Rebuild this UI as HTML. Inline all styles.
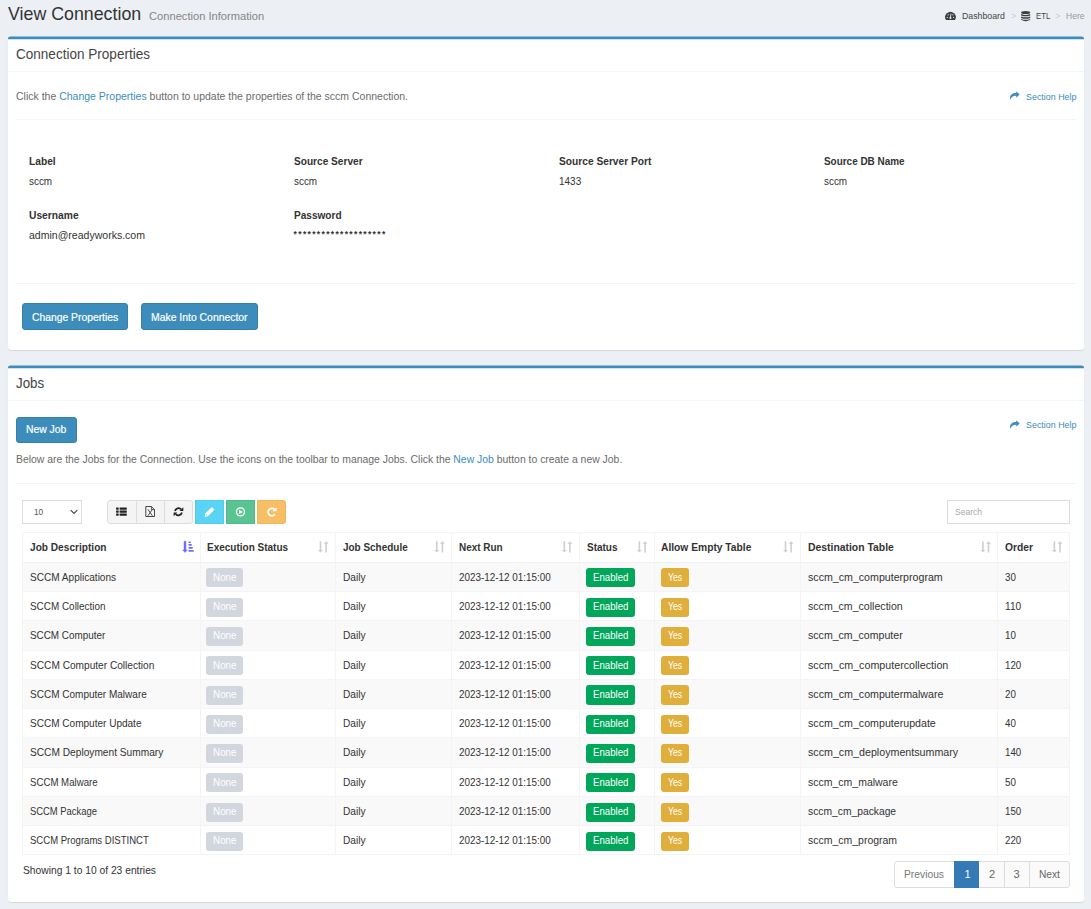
<!DOCTYPE html>
<html lang="en"><head><meta charset="utf-8"><title>View Connection</title>
<style>
html,body{margin:0;padding:0}
body{width:1091px;height:909px;overflow:hidden;background:#ecf0f5;position:relative;font-family:'Liberation Sans', sans-serif;color:#333}
.t{position:absolute;white-space:pre;line-height:1;margin:0;padding:0;transform-origin:0 0}
svg{position:absolute;overflow:visible}
</style></head><body>
<div style="position:absolute;left:8px;top:37px;width:1076px;height:313px;background:#fff;border-radius:3px;box-shadow:0 1px 1px rgba(0,0,0,.1)"></div>
<svg style="left:8px;top:36px" width="1076" height="4"><path d="M0 3.2 V2.5 Q0 0.5 2.5 0.5 H1073.5 Q1076 0.5 1076 2.5 V3.2 Z" fill="#3c8dbc"/></svg>
<div style="position:absolute;left:8px;top:71px;width:1076px;height:1px;background:#f4f4f4;"></div>
<div style="position:absolute;left:16px;top:119px;width:1060px;height:1px;background:#f4f4f4;"></div>
<div style="position:absolute;left:16px;top:283px;width:1060px;height:1px;background:#f4f4f4;"></div>
<div style="position:absolute;left:21.8px;top:303px;width:105.8px;height:27px;background:#3c8dbc;border:1px solid #367fa9;box-sizing:border-box;border-radius:3px"></div>
<div style="position:absolute;left:140.9px;top:303px;width:117.1px;height:27px;background:#3c8dbc;border:1px solid #367fa9;box-sizing:border-box;border-radius:3px"></div>
<div style="position:absolute;left:8px;top:366px;width:1076px;height:536px;background:#fff;border-radius:3px;box-shadow:0 1px 1px rgba(0,0,0,.1)"></div>
<svg style="left:8px;top:365px" width="1076" height="4"><path d="M0 3.2 V2.5 Q0 0.5 2.5 0.5 H1073.5 Q1076 0.5 1076 2.5 V3.2 Z" fill="#3c8dbc"/></svg>
<div style="position:absolute;left:8px;top:400px;width:1076px;height:1px;background:#f4f4f4;"></div>
<div style="position:absolute;left:16.2px;top:416.5px;width:60.8px;height:26.7px;background:#3c8dbc;border:1px solid #367fa9;box-sizing:border-box;border-radius:3px"></div>
<div style="position:absolute;left:16px;top:483px;width:1060px;height:1px;background:#f4f4f4;"></div>
<div style="position:absolute;left:22px;top:500px;width:60px;height:24px;background:#fff;border:1px solid #dadde4;box-sizing:border-box"></div>
<svg style="left:70px;top:508.5px" width="8" height="6" viewBox="0 0 8 6"><path d="M0.7 1.2 L4 4.5 L7.3 1.2" fill="none" stroke="#444" stroke-width="1.1"/></svg>
<div style="position:absolute;left:946.5px;top:500px;width:123.5px;height:24px;background:#fff;border:1px solid #d8dbe2;box-sizing:border-box"></div>
<div style="position:absolute;left:106.5px;top:500px;width:86.5px;height:24px;background:#f4f4f4;border:1px solid #ddd;box-sizing:border-box;border-radius:3px"></div>
<div style="position:absolute;left:136.3px;top:500px;width:1px;height:24px;background:#ddd;"></div>
<div style="position:absolute;left:163.8px;top:500px;width:1px;height:24px;background:#ddd;"></div>
<div style="position:absolute;left:194.7px;top:500px;width:29px;height:24px;background:#59d4f4;box-sizing:border-box;border:1px solid #55cbea"></div>
<div style="position:absolute;left:226px;top:500px;width:29px;height:24px;background:#59c492;box-sizing:border-box;border:1px solid #55b98a"></div>
<div style="position:absolute;left:257.1px;top:500px;width:29px;height:24px;background:#f7be65;box-sizing:border-box;border:1px solid #efb65e;border-radius:0 3px 3px 0"></div>
<div style="position:absolute;left:22px;top:562px;width:1048px;height:29px;background:#f9f9f9;"></div>
<div style="position:absolute;left:22px;top:620px;width:1048px;height:30px;background:#f9f9f9;"></div>
<div style="position:absolute;left:22px;top:679px;width:1048px;height:29px;background:#f9f9f9;"></div>
<div style="position:absolute;left:22px;top:737px;width:1048px;height:30px;background:#f9f9f9;"></div>
<div style="position:absolute;left:22px;top:796px;width:1048px;height:29px;background:#f9f9f9;"></div>
<div style="position:absolute;left:22px;top:532px;width:1048px;height:1px;background:#f4f4f4;"></div>
<div style="position:absolute;left:22px;top:562px;width:1048px;height:1px;background:#f0f0f0;"></div>
<div style="position:absolute;left:22px;top:591px;width:1048px;height:1px;background:#f4f4f4;"></div>
<div style="position:absolute;left:22px;top:620px;width:1048px;height:1px;background:#f4f4f4;"></div>
<div style="position:absolute;left:22px;top:650px;width:1048px;height:1px;background:#f4f4f4;"></div>
<div style="position:absolute;left:22px;top:679px;width:1048px;height:1px;background:#f4f4f4;"></div>
<div style="position:absolute;left:22px;top:708px;width:1048px;height:1px;background:#f4f4f4;"></div>
<div style="position:absolute;left:22px;top:737px;width:1048px;height:1px;background:#f4f4f4;"></div>
<div style="position:absolute;left:22px;top:767px;width:1048px;height:1px;background:#f4f4f4;"></div>
<div style="position:absolute;left:22px;top:796px;width:1048px;height:1px;background:#f4f4f4;"></div>
<div style="position:absolute;left:22px;top:825px;width:1048px;height:1px;background:#f4f4f4;"></div>
<div style="position:absolute;left:22px;top:854px;width:1048px;height:1px;background:#f4f4f4;"></div>
<div style="position:absolute;left:22px;top:532px;width:1px;height:323px;background:#f4f4f4;"></div>
<div style="position:absolute;left:200px;top:532px;width:1px;height:323px;background:#f4f4f4;"></div>
<div style="position:absolute;left:335px;top:532px;width:1px;height:323px;background:#f4f4f4;"></div>
<div style="position:absolute;left:451px;top:532px;width:1px;height:323px;background:#f4f4f4;"></div>
<div style="position:absolute;left:579px;top:532px;width:1px;height:323px;background:#f4f4f4;"></div>
<div style="position:absolute;left:654px;top:532px;width:1px;height:323px;background:#f4f4f4;"></div>
<div style="position:absolute;left:800px;top:532px;width:1px;height:323px;background:#f4f4f4;"></div>
<div style="position:absolute;left:997px;top:532px;width:1px;height:323px;background:#f4f4f4;"></div>
<div style="position:absolute;left:1069px;top:532px;width:1px;height:323px;background:#f4f4f4;"></div>
<div style="position:absolute;left:206.4px;top:568.4px;width:36.4px;height:19px;background:#d2d6de;border-radius:3px"></div>
<div style="position:absolute;left:586px;top:568.3px;width:49.2px;height:19.2px;background:#00a65a;border-radius:3px"></div>
<div style="position:absolute;left:661.2px;top:568.3px;width:27.4px;height:19.2px;background:#e0ae3b;border-radius:3px"></div>
<div style="position:absolute;left:206.4px;top:597.7px;width:36.4px;height:19px;background:#d2d6de;border-radius:3px"></div>
<div style="position:absolute;left:586px;top:597.6px;width:49.2px;height:19.2px;background:#00a65a;border-radius:3px"></div>
<div style="position:absolute;left:661.2px;top:597.6px;width:27.4px;height:19.2px;background:#e0ae3b;border-radius:3px"></div>
<div style="position:absolute;left:206.4px;top:626.9px;width:36.4px;height:19px;background:#d2d6de;border-radius:3px"></div>
<div style="position:absolute;left:586px;top:626.8px;width:49.2px;height:19.2px;background:#00a65a;border-radius:3px"></div>
<div style="position:absolute;left:661.2px;top:626.8px;width:27.4px;height:19.2px;background:#e0ae3b;border-radius:3px"></div>
<div style="position:absolute;left:206.4px;top:656.2px;width:36.4px;height:19px;background:#d2d6de;border-radius:3px"></div>
<div style="position:absolute;left:586px;top:656.1px;width:49.2px;height:19.2px;background:#00a65a;border-radius:3px"></div>
<div style="position:absolute;left:661.2px;top:656.1px;width:27.4px;height:19.2px;background:#e0ae3b;border-radius:3px"></div>
<div style="position:absolute;left:206.4px;top:685.5px;width:36.4px;height:19px;background:#d2d6de;border-radius:3px"></div>
<div style="position:absolute;left:586px;top:685.4px;width:49.2px;height:19.2px;background:#00a65a;border-radius:3px"></div>
<div style="position:absolute;left:661.2px;top:685.4px;width:27.4px;height:19.2px;background:#e0ae3b;border-radius:3px"></div>
<div style="position:absolute;left:206.4px;top:714.8px;width:36.4px;height:19px;background:#d2d6de;border-radius:3px"></div>
<div style="position:absolute;left:586px;top:714.7px;width:49.2px;height:19.2px;background:#00a65a;border-radius:3px"></div>
<div style="position:absolute;left:661.2px;top:714.7px;width:27.4px;height:19.2px;background:#e0ae3b;border-radius:3px"></div>
<div style="position:absolute;left:206.4px;top:744.0px;width:36.4px;height:19px;background:#d2d6de;border-radius:3px"></div>
<div style="position:absolute;left:586px;top:743.9px;width:49.2px;height:19.2px;background:#00a65a;border-radius:3px"></div>
<div style="position:absolute;left:661.2px;top:743.9px;width:27.4px;height:19.2px;background:#e0ae3b;border-radius:3px"></div>
<div style="position:absolute;left:206.4px;top:773.3px;width:36.4px;height:19px;background:#d2d6de;border-radius:3px"></div>
<div style="position:absolute;left:586px;top:773.2px;width:49.2px;height:19.2px;background:#00a65a;border-radius:3px"></div>
<div style="position:absolute;left:661.2px;top:773.2px;width:27.4px;height:19.2px;background:#e0ae3b;border-radius:3px"></div>
<div style="position:absolute;left:206.4px;top:802.6px;width:36.4px;height:19px;background:#d2d6de;border-radius:3px"></div>
<div style="position:absolute;left:586px;top:802.5px;width:49.2px;height:19.2px;background:#00a65a;border-radius:3px"></div>
<div style="position:absolute;left:661.2px;top:802.5px;width:27.4px;height:19.2px;background:#e0ae3b;border-radius:3px"></div>
<div style="position:absolute;left:206.4px;top:831.8px;width:36.4px;height:19px;background:#d2d6de;border-radius:3px"></div>
<div style="position:absolute;left:586px;top:831.7px;width:49.2px;height:19.2px;background:#00a65a;border-radius:3px"></div>
<div style="position:absolute;left:661.2px;top:831.7px;width:27.4px;height:19.2px;background:#e0ae3b;border-radius:3px"></div>
<div style="position:absolute;left:893.6px;top:861px;width:176.1px;height:27px;background:#fafafa;border:1px solid #ddd;box-sizing:border-box;border-radius:3px"></div>
<div style="position:absolute;left:894.6px;top:862px;width:59.4px;height:25px;background:#fff;border-radius:3px 0 0 3px"></div>
<div style="position:absolute;left:954px;top:861px;width:25.4px;height:27px;background:#337ab7;"></div>
<div style="position:absolute;left:1003.5px;top:861px;width:1px;height:27px;background:#ddd;"></div>
<div style="position:absolute;left:1028.7px;top:861px;width:1px;height:27px;background:#ddd;"></div>
<svg style="left:0;top:0;" width="1091" height="909" viewBox="0 0 1091 909"><path d="M946 20.1 A5.3 5.3 0 1 1 954.9 20.1 Z" fill="#3d3d3d"/><circle cx="950.45" cy="18" r="1.05" fill="#ecf0f5"/><path d="M950.45 17.6 L950.9 14" stroke="#ecf0f5" stroke-width="0.9" stroke-linecap="round"/><circle cx="947.3" cy="17.3" r="0.65" fill="#ecf0f5"/><circle cx="948.1" cy="14.8" r="0.65" fill="#ecf0f5"/><circle cx="953.6" cy="17.3" r="0.65" fill="#ecf0f5"/><circle cx="952.9" cy="14.8" r="0.65" fill="#ecf0f5"/><ellipse cx="1025.65" cy="12.4" rx="4.55" ry="1.5" fill="#3d3d3d"/><path d="M1021.1 14.1 q4.55 1.7 9.1 0 v1.4 q-4.55 1.7 -9.1 0 z M1021.1 16.5 q4.55 1.7 9.1 0 v1.4 q-4.55 1.7 -9.1 0 z M1021.1 18.9 q4.55 1.7 9.1 0 v0.9 q-4.55 2.9 -9.1 0 z" fill="#3d3d3d"/><path d="M1016.3 91.3 L1019.6 94.5 L1016.3 97.8 V95.8 C1013.2 95.7 1011.2 96.8 1010.5 100.0 C1009 96.2 1011.2 92.9 1016.3 92.9 Z" fill="#3c8dbc"/><path d="M1016.3 420.3 L1019.6 423.5 L1016.3 426.8 V424.8 C1013.2 424.7 1011.2 425.8 1010.5 429.0 C1009 425.2 1011.2 421.9 1016.3 421.9 Z" fill="#3c8dbc"/><rect x="116.1" y="507.4" width="2.6" height="2.3" rx="0.4" fill="#222"/><rect x="119.6" y="507.4" width="7.2" height="2.3" rx="0.4" fill="#222"/><rect x="116.1" y="510.4" width="2.6" height="2.3" rx="0.4" fill="#222"/><rect x="119.6" y="510.4" width="7.2" height="2.3" rx="0.4" fill="#222"/><rect x="116.1" y="513.4" width="2.6" height="2.3" rx="0.4" fill="#222"/><rect x="119.6" y="513.4" width="7.2" height="2.3" rx="0.4" fill="#222"/><path d="M145.8 506.5 H151.4 L154.5 509.6 V516.5 H145.8 Z" fill="none" stroke="#333" stroke-width="0.9"/><path d="M151.4 506.5 V509.6 H154.5" fill="none" stroke="#333" stroke-width="0.8"/><path d="M147.9 509.4 L152.4 515.8 M152.4 509.4 L147.9 515.8" stroke="#444" stroke-width="0.95"/><path d="M175 511 A3.6 3.6 0 0 1 181.2 509.4" fill="none" stroke="#222" stroke-width="1.7"/><path d="M183.3 507.3 V511 H179.6 Z" fill="#222"/><path d="M181.9 512.5 A3.6 3.6 0 0 1 175.7 514.1" fill="none" stroke="#222" stroke-width="1.7"/><path d="M173.6 516.2 V512.5 H177.3 Z" fill="#222"/><path d="M204.6 516.9 L205.3 513.6 L211.2 507.7 Q211.9 507 212.6 507.7 L213.8 508.9 Q214.5 509.6 213.8 510.3 L207.9 516.2 Z" fill="#fff"/><circle cx="206.4" cy="515.1" r="0.55" fill="#59d4f4"/><circle cx="240.5" cy="511.9" r="4" fill="none" stroke="#fff" stroke-width="1.4"/><path d="M239.2 509.8 V514 L242.8 511.9 Z" fill="#fff"/><path d="M274.9 514.3 A3.75 3.75 0 1 1 274.5 509.5" fill="none" stroke="#fff" stroke-width="1.8"/><path d="M276.6 507.3 V511.3 H272.6 Z" fill="#fff"/><path d="M319.7 541.2 H321.3 V550 H323.0 L320.5 552.6 L318.0 550 H319.7 Z" fill="#cfcfcf"/><path d="M325.3 552.6 H326.9 V543.8 H328.6 L326.1 541.2 L323.6 543.8 H325.3 Z" fill="#cfcfcf"/><path d="M436.0 541.2 H437.6 V550 H439.3 L436.8 552.6 L434.3 550 H436.0 Z" fill="#cfcfcf"/><path d="M441.6 552.6 H443.2 V543.8 H444.9 L442.4 541.2 L439.9 543.8 H441.6 Z" fill="#cfcfcf"/><path d="M563.5 541.2 H565.1 V550 H566.8 L564.3 552.6 L561.8 550 H563.5 Z" fill="#cfcfcf"/><path d="M569.1 552.6 H570.7 V543.8 H572.4 L569.9 541.2 L567.4 543.8 H569.1 Z" fill="#cfcfcf"/><path d="M638.6 541.2 H640.2 V550 H641.9 L639.4 552.6 L636.9 550 H638.6 Z" fill="#cfcfcf"/><path d="M644.2 552.6 H645.8 V543.8 H647.5 L645.0 541.2 L642.5 543.8 H644.2 Z" fill="#cfcfcf"/><path d="M784.7 541.2 H786.3 V550 H788.0 L785.5 552.6 L783.0 550 H784.7 Z" fill="#cfcfcf"/><path d="M790.3 552.6 H791.9 V543.8 H793.6 L791.1 541.2 L788.6 543.8 H790.3 Z" fill="#cfcfcf"/><path d="M982.1 541.2 H983.7 V550 H985.4 L982.9 552.6 L980.4 550 H982.1 Z" fill="#cfcfcf"/><path d="M987.7 552.6 H989.3 V543.8 H991.0 L988.5 541.2 L986.0 543.8 H987.7 Z" fill="#cfcfcf"/><path d="M1053.6 541.2 H1055.2 V550 H1056.9 L1054.4 552.6 L1051.9 550 H1053.6 Z" fill="#cfcfcf"/><path d="M1059.2 552.6 H1060.8 V543.8 H1062.5 L1060.0 541.2 L1057.5 543.8 H1059.2 Z" fill="#cfcfcf"/><path d="M184 541.2 H186 V549.9 H187.4 L185 552.6 L182.6 549.9 H184 Z" fill="#6c6cff" stroke="#6c6cff" stroke-width="0.4" stroke-linejoin="round"/><rect x="188.5" y="541.4" width="2.3" height="1.7" rx="0.3" fill="#6c6cff"/><rect x="188.5" y="544.1" width="3.3" height="1.7" rx="0.3" fill="#6c6cff"/><rect x="188.5" y="547" width="4.2" height="1.8" rx="0.3" fill="#6c6cff"/><rect x="188.5" y="549.9" width="5.2" height="1.8" rx="0.3" fill="#6c6cff"/></svg>
<span class="t" style="left:8.2px;top:5px;font-size:18.6px;color:#333;transform:scaleX(0.9569);">View Connection</span>
<span class="t" style="left:149.4px;top:10px;font-size:11.6px;color:#858585;transform:scaleX(0.9610);">Connection Information</span>
<span class="t" style="left:961.5px;top:11px;font-size:9.6px;color:#444;transform:scaleX(0.9119);">Dashboard</span>
<span class="t" style="left:1010.9px;top:11px;font-size:9.6px;color:#ccc;">&gt;</span>
<span class="t" style="left:1035.5px;top:11px;font-size:9.6px;color:#444;transform:scaleX(0.8121);">ETL</span>
<span class="t" style="left:1054.9px;top:11px;font-size:9.6px;color:#ccc;">&gt;</span>
<span class="t" style="left:1065.5px;top:11px;font-size:9.6px;color:#999;transform:scaleX(0.8896);">Here</span>
<span class="t" style="left:16.2px;top:47px;font-size:14.2px;color:#444;transform:scaleX(0.9545);">Connection Properties</span>
<span class="t" style="left:16.2px;top:91px;font-size:11px;color:#6b6b6b;transform:scaleX(0.9539);">Click the <span style="color:#3c8dbc">Change Properties</span> button to update the properties of the sccm Connection.</span>
<span class="t" style="left:1025.7px;top:92px;font-size:9.6px;color:#3c8dbc;transform:scaleX(0.9282);">Section Help</span>
<span class="t" style="left:28.6px;top:156px;font-size:11px;color:#333;font-weight:700;transform:scaleX(0.9292);">Label</span>
<span class="t" style="left:293.7px;top:156px;font-size:11px;color:#333;font-weight:700;transform:scaleX(0.9195);">Source Server</span>
<span class="t" style="left:558.6px;top:156px;font-size:11px;color:#333;font-weight:700;transform:scaleX(0.9272);">Source Server Port</span>
<span class="t" style="left:823.6px;top:156px;font-size:11px;color:#333;font-weight:700;transform:scaleX(0.9029);">Source DB Name</span>
<span class="t" style="left:28.6px;top:176px;font-size:11px;color:#333;transform:scaleX(0.8998);">sccm</span>
<span class="t" style="left:293.7px;top:176px;font-size:11px;color:#333;transform:scaleX(0.8998);">sccm</span>
<span class="t" style="left:558.6px;top:176px;font-size:11px;color:#333;transform:scaleX(0.9067);">1433</span>
<span class="t" style="left:823.6px;top:176px;font-size:11px;color:#333;transform:scaleX(0.8998);">sccm</span>
<span class="t" style="left:28.6px;top:210px;font-size:11px;color:#333;font-weight:700;transform:scaleX(0.9323);">Username</span>
<span class="t" style="left:293.7px;top:210px;font-size:11px;color:#333;font-weight:700;transform:scaleX(0.9159);">Password</span>
<span class="t" style="left:28.6px;top:230px;font-size:11px;color:#333;transform:scaleX(0.9569);">admin@readyworks.com</span>
<span class="t" style="left:293.6px;top:230px;font-size:8.5px;color:#333;font-weight:700;letter-spacing:1.34px;">********************</span>
<span class="t" style="left:31.6px;top:312px;font-size:11px;color:#fff;transform:scaleX(0.9397);-webkit-text-stroke:0.2px #fff;">Change Properties</span>
<span class="t" style="left:151.4px;top:312px;font-size:11px;color:#fff;transform:scaleX(0.9459);-webkit-text-stroke:0.2px #fff;">Make Into Connector</span>
<span class="t" style="left:16.2px;top:376px;font-size:14.2px;color:#444;transform:scaleX(0.9410);">Jobs</span>
<span class="t" style="left:26.4px;top:424px;font-size:11px;color:#fff;transform:scaleX(0.9417);-webkit-text-stroke:0.2px #fff;">New Job</span>
<span class="t" style="left:1025.7px;top:420px;font-size:9.6px;color:#3c8dbc;transform:scaleX(0.9282);">Section Help</span>
<span class="t" style="left:16.2px;top:454px;font-size:11px;color:#6b6b6b;transform:scaleX(0.9461);">Below are the Jobs for the Connection. Use the icons on the toolbar to manage Jobs. Click the <span style="color:#3c8dbc">New Job</span> button to create a new Job.</span>
<span class="t" style="left:34.3px;top:508px;font-size:9px;color:#555;transform:scaleX(0.9186);">10</span>
<span class="t" style="left:955px;top:507px;font-size:9.5px;color:#aaa;transform:scaleX(0.8967);">Search</span>
<span class="t" style="left:29.8px;top:542px;font-size:11px;color:#333;font-weight:700;transform:scaleX(0.9203);">Job Description</span>
<span class="t" style="left:206.9px;top:542px;font-size:11px;color:#333;font-weight:700;transform:scaleX(0.9087);">Execution Status</span>
<span class="t" style="left:342.9px;top:542px;font-size:11px;color:#333;font-weight:700;transform:scaleX(0.9045);">Job Schedule</span>
<span class="t" style="left:459.2px;top:542px;font-size:11px;color:#333;font-weight:700;transform:scaleX(0.9030);">Next Run</span>
<span class="t" style="left:586.5px;top:542px;font-size:11px;color:#333;font-weight:700;transform:scaleX(0.9071);">Status</span>
<span class="t" style="left:661.4px;top:542px;font-size:11px;color:#333;font-weight:700;transform:scaleX(0.9321);">Allow Empty Table</span>
<span class="t" style="left:807.6px;top:542px;font-size:11px;color:#333;font-weight:700;transform:scaleX(0.9442);">Destination Table</span>
<span class="t" style="left:1004.8px;top:542px;font-size:11px;color:#333;font-weight:700;transform:scaleX(0.9343);">Order</span>
<span class="t" style="left:29.8px;top:572px;font-size:11px;color:#333;transform:scaleX(0.9144);">SCCM Applications</span>
<span class="t" style="left:213.3px;top:573px;font-size:10px;color:#fff;transform:scaleX(0.9872);">None</span>
<span class="t" style="left:342.9px;top:572px;font-size:11px;color:#333;transform:scaleX(0.9242);">Daily</span>
<span class="t" style="left:459.2px;top:572px;font-size:11px;color:#333;transform:scaleX(0.8986);">2023-12-12 01:15:00</span>
<span class="t" style="left:592.9px;top:573px;font-size:10px;color:#fff;transform:scaleX(0.9645);">Enabled</span>
<span class="t" style="left:667.8px;top:573px;font-size:10px;color:#fff;transform:scaleX(0.8697);">Yes</span>
<span class="t" style="left:807.6px;top:572px;font-size:11px;color:#333;transform:scaleX(0.9665);">sccm_cm_computerprogram</span>
<span class="t" style="left:1004.8px;top:572px;font-size:11px;color:#333;transform:scaleX(0.8898);">30</span>
<span class="t" style="left:29.8px;top:601px;font-size:11px;color:#333;transform:scaleX(0.9015);">SCCM Collection</span>
<span class="t" style="left:213.3px;top:602px;font-size:10px;color:#fff;transform:scaleX(0.9872);">None</span>
<span class="t" style="left:342.9px;top:601px;font-size:11px;color:#333;transform:scaleX(0.9242);">Daily</span>
<span class="t" style="left:459.2px;top:601px;font-size:11px;color:#333;transform:scaleX(0.8986);">2023-12-12 01:15:00</span>
<span class="t" style="left:592.9px;top:602px;font-size:10px;color:#fff;transform:scaleX(0.9645);">Enabled</span>
<span class="t" style="left:667.8px;top:602px;font-size:10px;color:#fff;transform:scaleX(0.8697);">Yes</span>
<span class="t" style="left:807.6px;top:601px;font-size:11px;color:#333;transform:scaleX(0.9622);">sccm_cm_collection</span>
<span class="t" style="left:1004.8px;top:601px;font-size:11px;color:#333;transform:scaleX(0.9232);">110</span>
<span class="t" style="left:29.8px;top:630px;font-size:11px;color:#333;transform:scaleX(0.8979);">SCCM Computer</span>
<span class="t" style="left:213.3px;top:631px;font-size:10px;color:#fff;transform:scaleX(0.9872);">None</span>
<span class="t" style="left:342.9px;top:630px;font-size:11px;color:#333;transform:scaleX(0.9242);">Daily</span>
<span class="t" style="left:459.2px;top:630px;font-size:11px;color:#333;transform:scaleX(0.8986);">2023-12-12 01:15:00</span>
<span class="t" style="left:592.9px;top:631px;font-size:10px;color:#fff;transform:scaleX(0.9645);">Enabled</span>
<span class="t" style="left:667.8px;top:631px;font-size:10px;color:#fff;transform:scaleX(0.8697);">Yes</span>
<span class="t" style="left:807.6px;top:630px;font-size:11px;color:#333;transform:scaleX(0.9622);">sccm_cm_computer</span>
<span class="t" style="left:1004.8px;top:630px;font-size:11px;color:#333;transform:scaleX(0.8898);">10</span>
<span class="t" style="left:29.8px;top:660px;font-size:11px;color:#333;transform:scaleX(0.9207);">SCCM Computer Collection</span>
<span class="t" style="left:213.3px;top:661px;font-size:10px;color:#fff;transform:scaleX(0.9872);">None</span>
<span class="t" style="left:342.9px;top:660px;font-size:11px;color:#333;transform:scaleX(0.9242);">Daily</span>
<span class="t" style="left:459.2px;top:660px;font-size:11px;color:#333;transform:scaleX(0.8986);">2023-12-12 01:15:00</span>
<span class="t" style="left:592.9px;top:661px;font-size:10px;color:#fff;transform:scaleX(0.9645);">Enabled</span>
<span class="t" style="left:667.8px;top:661px;font-size:10px;color:#fff;transform:scaleX(0.8697);">Yes</span>
<span class="t" style="left:807.6px;top:660px;font-size:11px;color:#333;transform:scaleX(0.9724);">sccm_cm_computercollection</span>
<span class="t" style="left:1004.8px;top:660px;font-size:11px;color:#333;transform:scaleX(0.8824);">120</span>
<span class="t" style="left:29.8px;top:689px;font-size:11px;color:#333;transform:scaleX(0.9098);">SCCM Computer Malware</span>
<span class="t" style="left:213.3px;top:690px;font-size:10px;color:#fff;transform:scaleX(0.9872);">None</span>
<span class="t" style="left:342.9px;top:689px;font-size:11px;color:#333;transform:scaleX(0.9242);">Daily</span>
<span class="t" style="left:459.2px;top:689px;font-size:11px;color:#333;transform:scaleX(0.8986);">2023-12-12 01:15:00</span>
<span class="t" style="left:592.9px;top:690px;font-size:10px;color:#fff;transform:scaleX(0.9645);">Enabled</span>
<span class="t" style="left:667.8px;top:690px;font-size:10px;color:#fff;transform:scaleX(0.8697);">Yes</span>
<span class="t" style="left:807.6px;top:689px;font-size:11px;color:#333;transform:scaleX(0.9673);">sccm_cm_computermalware</span>
<span class="t" style="left:1004.8px;top:689px;font-size:11px;color:#333;transform:scaleX(0.8898);">20</span>
<span class="t" style="left:29.8px;top:718px;font-size:11px;color:#333;transform:scaleX(0.9118);">SCCM Computer Update</span>
<span class="t" style="left:213.3px;top:719px;font-size:10px;color:#fff;transform:scaleX(0.9872);">None</span>
<span class="t" style="left:342.9px;top:718px;font-size:11px;color:#333;transform:scaleX(0.9242);">Daily</span>
<span class="t" style="left:459.2px;top:718px;font-size:11px;color:#333;transform:scaleX(0.8986);">2023-12-12 01:15:00</span>
<span class="t" style="left:592.9px;top:719px;font-size:10px;color:#fff;transform:scaleX(0.9645);">Enabled</span>
<span class="t" style="left:667.8px;top:719px;font-size:10px;color:#fff;transform:scaleX(0.8697);">Yes</span>
<span class="t" style="left:807.6px;top:718px;font-size:11px;color:#333;transform:scaleX(0.9677);">sccm_cm_computerupdate</span>
<span class="t" style="left:1004.8px;top:718px;font-size:11px;color:#333;transform:scaleX(0.8898);">40</span>
<span class="t" style="left:29.8px;top:747px;font-size:11px;color:#333;transform:scaleX(0.9240);">SCCM Deployment Summary</span>
<span class="t" style="left:213.3px;top:748px;font-size:10px;color:#fff;transform:scaleX(0.9872);">None</span>
<span class="t" style="left:342.9px;top:747px;font-size:11px;color:#333;transform:scaleX(0.9242);">Daily</span>
<span class="t" style="left:459.2px;top:747px;font-size:11px;color:#333;transform:scaleX(0.8986);">2023-12-12 01:15:00</span>
<span class="t" style="left:592.9px;top:748px;font-size:10px;color:#fff;transform:scaleX(0.9645);">Enabled</span>
<span class="t" style="left:667.8px;top:748px;font-size:10px;color:#fff;transform:scaleX(0.8697);">Yes</span>
<span class="t" style="left:807.6px;top:747px;font-size:11px;color:#333;transform:scaleX(0.9712);">sccm_cm_deploymentsummary</span>
<span class="t" style="left:1004.8px;top:747px;font-size:11px;color:#333;transform:scaleX(0.8824);">140</span>
<span class="t" style="left:29.8px;top:777px;font-size:11px;color:#333;transform:scaleX(0.8777);">SCCM Malware</span>
<span class="t" style="left:213.3px;top:778px;font-size:10px;color:#fff;transform:scaleX(0.9872);">None</span>
<span class="t" style="left:342.9px;top:777px;font-size:11px;color:#333;transform:scaleX(0.9242);">Daily</span>
<span class="t" style="left:459.2px;top:777px;font-size:11px;color:#333;transform:scaleX(0.8986);">2023-12-12 01:15:00</span>
<span class="t" style="left:592.9px;top:778px;font-size:10px;color:#fff;transform:scaleX(0.9645);">Enabled</span>
<span class="t" style="left:667.8px;top:778px;font-size:10px;color:#fff;transform:scaleX(0.8697);">Yes</span>
<span class="t" style="left:807.6px;top:777px;font-size:11px;color:#333;transform:scaleX(0.9539);">sccm_cm_malware</span>
<span class="t" style="left:1004.8px;top:777px;font-size:11px;color:#333;transform:scaleX(0.8898);">50</span>
<span class="t" style="left:29.8px;top:806px;font-size:11px;color:#333;transform:scaleX(0.8548);">SCCM Package</span>
<span class="t" style="left:213.3px;top:807px;font-size:10px;color:#fff;transform:scaleX(0.9872);">None</span>
<span class="t" style="left:342.9px;top:806px;font-size:11px;color:#333;transform:scaleX(0.9242);">Daily</span>
<span class="t" style="left:459.2px;top:806px;font-size:11px;color:#333;transform:scaleX(0.8986);">2023-12-12 01:15:00</span>
<span class="t" style="left:592.9px;top:807px;font-size:10px;color:#fff;transform:scaleX(0.9645);">Enabled</span>
<span class="t" style="left:667.8px;top:807px;font-size:10px;color:#fff;transform:scaleX(0.8697);">Yes</span>
<span class="t" style="left:807.6px;top:806px;font-size:11px;color:#333;transform:scaleX(0.9357);">sccm_cm_package</span>
<span class="t" style="left:1004.8px;top:806px;font-size:11px;color:#333;transform:scaleX(0.8824);">150</span>
<span class="t" style="left:29.8px;top:835px;font-size:11px;color:#333;transform:scaleX(0.8677);">SCCM Programs DISTINCT</span>
<span class="t" style="left:213.3px;top:836px;font-size:10px;color:#fff;transform:scaleX(0.9872);">None</span>
<span class="t" style="left:342.9px;top:835px;font-size:11px;color:#333;transform:scaleX(0.9242);">Daily</span>
<span class="t" style="left:459.2px;top:835px;font-size:11px;color:#333;transform:scaleX(0.8986);">2023-12-12 01:15:00</span>
<span class="t" style="left:592.9px;top:836px;font-size:10px;color:#fff;transform:scaleX(0.9645);">Enabled</span>
<span class="t" style="left:667.8px;top:836px;font-size:10px;color:#fff;transform:scaleX(0.8697);">Yes</span>
<span class="t" style="left:807.6px;top:835px;font-size:11px;color:#333;transform:scaleX(0.9526);">sccm_cm_program</span>
<span class="t" style="left:1004.8px;top:835px;font-size:11px;color:#333;transform:scaleX(0.8824);">220</span>
<span class="t" style="left:22.5px;top:865px;font-size:11px;color:#333;transform:scaleX(0.9334);">Showing 1 to 10 of 23 entries</span>
<span class="t" style="left:904.2px;top:869px;font-size:11px;color:#777;transform:scaleX(0.9346);">Previous</span>
<span class="t" style="left:964.4px;top:869px;font-size:11px;color:#fff;">1</span>
<span class="t" style="left:988.9px;top:869px;font-size:11px;color:#666;">2</span>
<span class="t" style="left:1013.5px;top:869px;font-size:11px;color:#666;">3</span>
<span class="t" style="left:1038.7px;top:869px;font-size:11px;color:#666;transform:scaleX(0.9193);">Next</span>
</body></html>
